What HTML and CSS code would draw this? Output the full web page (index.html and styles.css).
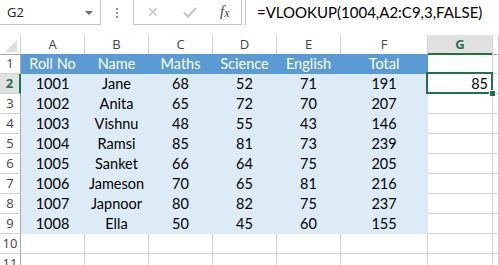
FILE: index.html
```html
<!DOCTYPE html>
<html lang="en">
<head>
    <meta charset="UTF-8">
    <meta name="viewport" content="width=device-width, initial-scale=1.0">
    <title>VLOOKUP - Marks</title>
    <link rel="stylesheet" href="styles.css">
</head>
<body>
    <!-- formula bar -->
    <div class="formula-bar">
        <div class="name-box">
            <span>G2</span>
            <span class="caret"></span>
        </div>
        <div class="grip"><i></i><i></i><i></i></div>
        <div class="fx-buttons">
            <span class="btn-cancel">&#x2715;</span>
            <span class="btn-enter">
                <svg width="14" height="11" viewBox="0 0 14 11"><path d="M1 5.5 L5 9.5 L13 1" fill="none" stroke="#c4c4c4" stroke-width="2.2"/></svg>
            </span>
            <span class="btn-fx">f<sub>x</sub></span>
        </div>
        <div class="formula">=VLOOKUP(1004,A2:C9,3,FALSE)</div>
    </div>

    <!-- sheet -->
    <div class="sheet" id="sheet">
        <div class="row head">
            <div class="corner"><span></span></div>
            <div class="col">A</div>
            <div class="col">B</div>
            <div class="col">C</div>
            <div class="col">D</div>
            <div class="col">E</div>
            <div class="col">F</div>
            <div class="col active">G</div>
            <div class="col"></div>
        </div>
    </div>

    <script>
        const header = ['Roll No', 'Name', 'Maths', 'Science', 'English', 'Total'];
        const marks = [
            [1001, 'Jane', 68, 52, 71, 191],
            [1002, 'Anita', 65, 72, 70, 207],
            [1003, 'Vishnu', 48, 55, 43, 146],
            [1004, 'Ramsi', 85, 81, 73, 239],
            [1005, 'Sanket', 66, 64, 75, 205],
            [1006, 'Jameson', 70, 65, 81, 216],
            [1007, 'Japnoor', 80, 82, 75, 237],
            [1008, 'Ella', 50, 45, 60, 155]
        ];

        const sheet = document.getElementById('sheet');
        const rows = [header, ...marks, null, null];

        rows.forEach((data, i) => {
            const n = i + 1;
            let html = `<div class="num${n === 2 ? ' active' : ''}">${n}</div>`;
            for (let c = 0; c < 6; c++) {
                if (!data) {
                    html += '<div class="cell"></div>';
                } else {
                    const cls = i === 0 ? 'cell th' : 'cell td';
                    html += `<div class="${cls}">${data[c]}</div>`;
                }
            }
            // column G holds the lookup result
            html += n === 2 ? '<div class="cell num-val selected">85</div>' : '<div class="cell"></div>';
            html += '<div class="cell"></div>';
            const row = document.createElement('div');
            row.className = 'row';
            row.innerHTML = html;
            sheet.appendChild(row);
        });
    </script>
</body>
</html>
```

FILE: styles.css
```css
body {
    margin: 0;
    width: 499px;
    height: 265px;
    overflow: hidden;
    background-color: #ffffff;
    font-family: Lato, "Liberation Sans", sans-serif;
    color: #000000;
}

/* formula bar */
.formula-bar {
    display: flex;
    height: 25px;
    margin-bottom: 10px;
}
.name-box {
    width: 101px;
    box-sizing: border-box;
    border-right: 1px solid #c6c6c6;
    border-bottom: 1px solid #c6c6c6;
    display: flex;
    align-items: center;
    justify-content: space-between;
    padding: 0 7px;
    font-family: "Open Sans", sans-serif;
    font-size: 13px;
    color: #222222;
}
.caret {
    width: 0;
    height: 0;
    border-left: 4px solid transparent;
    border-right: 4px solid transparent;
    border-top: 4px solid #6d6d6d;
    margin-top: 1px;
}
.grip {
    width: 32px;
    display: flex;
    flex-direction: column;
    align-items: center;
    justify-content: center;
    gap: 2px;
}
.grip i {
    width: 2px;
    height: 2px;
    background-color: #9a9a9a;
}
.fx-buttons {
    width: 109px;
    box-sizing: border-box;
    border: 1px solid #c6c6c6;
    border-top: none;
    display: flex;
    align-items: center;
    padding-left: 13px;
    color: #c4c4c4;
}
.btn-cancel {
    font-size: 14px;
    width: 36px;
    font-family: "DejaVu Sans", sans-serif;
}
.btn-enter {
    width: 37px;
    display: flex;
}
.btn-fx {
    font-family: "Liberation Serif", serif;
    font-style: italic;
    font-size: 15px;
    color: #444444;
}
.btn-fx sub {
    font-size: 12px;
    vertical-align: -1px;
}
.formula {
    flex: 1;
    margin-left: 3px;
    border-left: 1px solid #c6c6c6;
    padding-left: 11px;
    font-size: 15px;
    line-height: 25px;
    color: #000000;
}

/* grid */
.row {
    display: grid;
    grid-template-columns: 21px 64px 64px 64px 64px 64px 87px 65px 1fr;
    height: 20px;
}
.row > div {
    box-sizing: border-box;
    border-right: 1px solid #d4d4d4;
    border-bottom: 1px solid #d4d4d4;
}
.head {
    height: 19px;
}
.head .col {
    font-family: "Open Sans", sans-serif;
    font-size: 13px;
    color: #444444;
    text-align: center;
    line-height: 18px;
    border-bottom-color: #ababab;
}
.head .col.active {
    background-color: #e1e1e1;
    color: #217346;
    font-weight: 700;
    border-bottom: 2px solid #217346;
}
.corner {
    position: relative;
    border-bottom-color: #ababab !important;
}
.corner span {
    position: absolute;
    right: 3px;
    bottom: 2px;
    width: 0;
    height: 0;
    border-left: 12px solid transparent;
    border-bottom: 12px solid #dfdfdf;
}
.num {
    font-family: "Open Sans", sans-serif;
    font-size: 13px;
    color: #444444;
    text-align: center;
    line-height: 19px;
    border-right-color: #ababab !important;
}
.num.active {
    background-color: #e1e1e1;
    color: #217346;
    font-weight: 700;
    border-right: 2px solid #217346 !important;
}
.cell {
    font-size: 14.5px;
    line-height: 19px;
    text-align: center;
}
.th {
    background-color: #5b9bd5;
    border-color: #5b9bd5 !important;
    color: #ffffff;
}
.td {
    background-color: #ddebf7;
    border-color: #ddebf7 !important;
}
.num-val {
    text-align: right;
    padding-right: 4px;
}
.selected {
    position: relative;
}
.selected::before {
    content: "";
    position: absolute;
    left: -2px;
    top: -2px;
    right: -1px;
    bottom: -1px;
    border: 2px solid #217346;
}
.selected::after {
    content: "";
    position: absolute;
    right: -4px;
    bottom: -4px;
    width: 5px;
    height: 5px;
    background-color: #217346;
    border: 1px solid #ffffff;
}
```
